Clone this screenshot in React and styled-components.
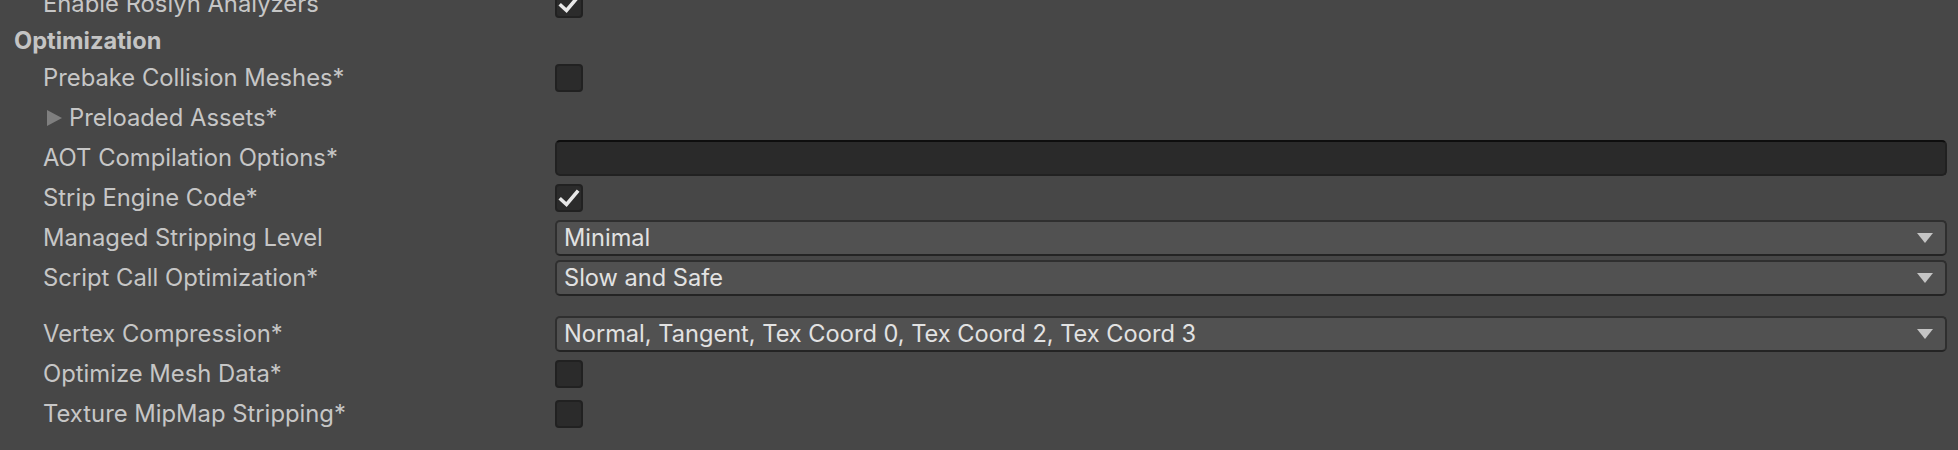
import React from "react";
import styled, { createGlobalStyle } from "styled-components";

const Global = createGlobalStyle`
  html, body { margin: 0; padding: 0; background: #474747; overflow: hidden; }
  body { font-family: Inter, "Noto Sans", sans-serif; }
`;

const Panel = styled.div`
  width: 1958px;
  height: 450px;
  background: #474747;
  overflow: hidden;
`;

const List = styled.div`
  display: flex;
  flex-direction: column;
  gap: 4px;
  margin-top: -14px;
  padding-right: 11px;
`;

const Row = styled.div`
  display: grid;
  grid-template-columns: 555px 1fr;
  align-items: center;
  height: 36px;
`;

const Header = styled.div`
  height: 30px;
  display: flex;
  align-items: center;
  padding-left: 14px;
  padding-bottom: 2px;
  box-sizing: border-box;
  font-size: 23.6px;
  font-weight: 700;
  color: #c4c4c4;
`;

const Spacer = styled.div`
  height: 12px;
`;

const Label = styled.div`
  display: flex;
  align-items: center;
  gap: 7px;
  padding-left: ${(p) => (p.$foldout ? 47 : 43)}px;
  padding-bottom: 2px;
  font-size: 23.8px;
  color: #c6c6c6;
  white-space: nowrap;
`;

const Arrow = styled.span`
  width: 0;
  height: 0;
  margin-top: 2px;
  border-top: 8px solid transparent;
  border-bottom: 8px solid transparent;
  border-left: 15px solid #7f7f7f;
`;

const Box = styled.div`
  width: 28px;
  height: 28px;
  box-sizing: border-box;
  border: 2px solid #212121;
  border-radius: 4px;
  background: #2b2b2b;
  display: flex;
  align-items: center;
  justify-content: center;
`;

const TextField = styled.div`
  height: 36px;
  box-sizing: border-box;
  border: 2px solid #212121;
  border-top-color: #0e0e0e;
  border-radius: 5px;
  background: #2a2a2a;
`;

const Dropdown = styled.div`
  height: 36px;
  box-sizing: border-box;
  border: 2px solid #2f2f2f;
  border-bottom-color: #242424;
  border-radius: 5px;
  background: #515151;
  display: flex;
  align-items: center;
  justify-content: space-between;
  padding: 0 12px 2px 7px;
  font-size: 23.6px;
  color: #e2e2e2;
  white-space: nowrap;
`;

const DownArrow = styled.span`
  width: 0;
  height: 0;
  margin-top: 2px;
  border-left: 8px solid transparent;
  border-right: 8px solid transparent;
  border-top: 10px solid #c4c4c4;
`;

const Check = () => (
  <svg width="22" height="22" viewBox="0 0 22 22">
    <path d="M3 12.5 L8.5 17.5 L19 5" fill="none" stroke="#e8e8e8" strokeWidth="3.6" strokeLinecap="square" strokeLinejoin="miter" />
  </svg>
);

const Checkbox = ({ checked }) => <Box>{checked && <Check />}</Box>;

const rows = [
  { type: "row", label: "Enable Roslyn Analyzers", control: "check", checked: true },
  { type: "header", label: "Optimization" },
  { type: "row", label: "Prebake Collision Meshes*", control: "check" },
  { type: "row", label: "Preloaded Assets*", foldout: true },
  { type: "row", label: "AOT Compilation Options*", control: "text" },
  { type: "row", label: "Strip Engine Code*", control: "check", checked: true },
  { type: "row", label: "Managed Stripping Level", control: "drop", value: "Minimal" },
  { type: "row", label: "Script Call Optimization*", control: "drop", value: "Slow and Safe" },
  { type: "space" },
  { type: "row", label: "Vertex Compression*", control: "drop", value: "Normal, Tangent, Tex Coord 0, Tex Coord 2, Tex Coord 3" },
  { type: "row", label: "Optimize Mesh Data*", control: "check" },
  { type: "row", label: "Texture MipMap Stripping*", control: "check" },
];

const Control = ({ r }) => {
  if (r.control === "check") return <Checkbox checked={r.checked} />;
  if (r.control === "text") return <TextField />;
  if (r.control === "drop")
    return (
      <Dropdown>
        <span>{r.value}</span>
        <DownArrow />
      </Dropdown>
    );
  return <div />;
};

export default function App() {
  return (
    <Panel>
      <Global />
      <List>
        {rows.map((r, i) => {
          if (r.type === "header") return <Header key={i}>{r.label}</Header>;
          if (r.type === "space") return <Spacer key={i} />;
          return (
            <Row key={i}>
              <Label $foldout={r.foldout}>
                {r.foldout && <Arrow />}
                {r.label}
              </Label>
              <Control r={r} />
            </Row>
          );
        })}
      </List>
    </Panel>
  );
}
